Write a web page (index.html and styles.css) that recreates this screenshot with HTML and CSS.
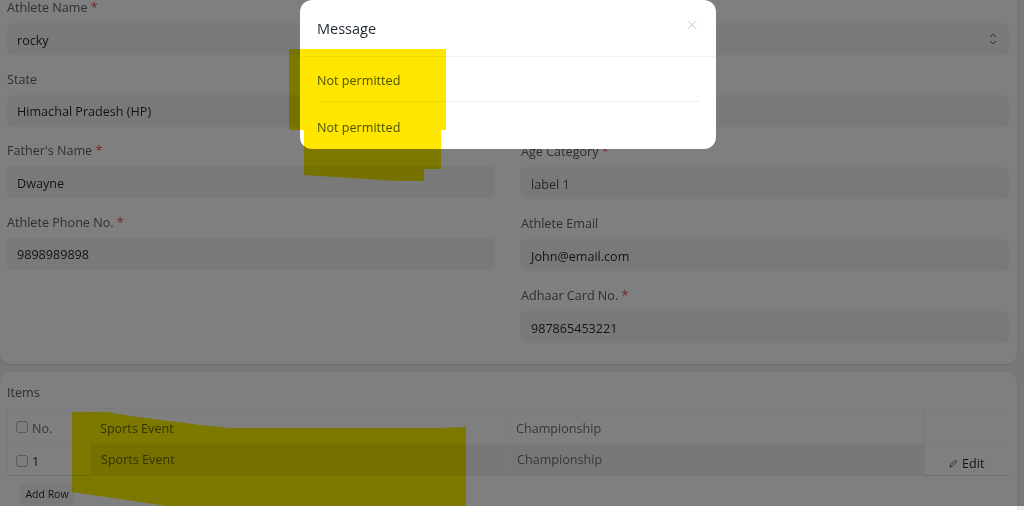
FILE: index.html
```html
<!DOCTYPE html>
<html lang="en">
<head>
    <meta charset="UTF-8">
    <meta name="viewport" content="width=device-width, initial-scale=1.0">
    <title>Athlete</title>
    <link rel="stylesheet" href="styles.css">
</head>
<body>
    <div class="page">
        <div class="form-card">
            <div class="form-column">
                <div class="field">
                    <label>Athlete Name <span class="req">*</span></label>
                    <div class="input">rocky</div>
                </div>
                <div class="field">
                    <label>State</label>
                    <div class="input">Himachal Pradesh (HP)</div>
                </div>
                <div class="field">
                    <label>Father's Name <span class="req">*</span></label>
                    <div class="input">Dwayne</div>
                </div>
                <div class="field">
                    <label>Athlete Phone No. <span class="req">*</span></label>
                    <div class="input">9898989898</div>
                </div>
            </div>
            <div class="form-column form-column-right">
                <div class="field">
                    <label>&nbsp;</label>
                    <div class="input input-select">
                        <svg class="updown" viewBox="0 0 8 12" width="8" height="12">
                            <path d="M1.2 4 L4 1.2 L6.8 4 M1.2 8 L4 10.8 L6.8 8" fill="none" stroke="#444" stroke-width="1"/>
                        </svg>
                    </div>
                </div>
                <div class="field">
                    <label>&nbsp;</label>
                    <div class="input"></div>
                </div>
                <div class="field">
                    <label>Age Category <span class="req">*</span></label>
                    <div class="input input-muted">label 1</div>
                </div>
                <div class="field">
                    <label>Athlete Email</label>
                    <div class="input">John@email.com</div>
                </div>
                <div class="field">
                    <label>Adhaar Card No. <span class="req">*</span></label>
                    <div class="input">987865453221</div>
                </div>
            </div>
        </div>

        <div class="items-card">
            <div class="items-title">Items</div>
            <div class="grid">
                <div class="grid-row grid-head">
                    <div class="cell cell-check"><input type="checkbox"> No.</div>
                    <div class="cell">Sports Event</div>
                    <div class="cell">Championship</div>
                    <div class="cell"></div>
                </div>
                <div class="grid-row grid-body">
                    <div class="cell cell-check cell-plain"><input type="checkbox"> <span class="row-no">1</span></div>
                    <div class="cell cell-value">Sports Event</div>
                    <div class="cell cell-value">Championship</div>
                    <div class="cell cell-plain cell-edit">
                        <svg viewBox="0 0 10 10" width="9" height="9">
                            <path d="M1 9 L1.6 6.6 L7 1.2 L8.8 3 L3.4 8.4 Z" fill="none" stroke="#333" stroke-width="0.9"/>
                        </svg>
                        Edit
                    </div>
                </div>
            </div>
            <button class="add-row">Add Row</button>
        </div>

        <div class="backdrop"></div>

        <div class="modal">
            <div class="modal-header">
                <span class="modal-title">Message</span>
                <span class="modal-close">&times;</span>
            </div>
            <div class="modal-body">
                <div class="message">Not permitted</div>
                <div class="message">Not permitted</div>
            </div>
        </div>

        <!-- highlighter marks drawn over the screenshot -->
        <svg class="marks" viewBox="0 0 1024 510" width="1024" height="510">
            <polygon fill="#f8f000" points="289,49 446,49 446,130 441,130 441,169 424,169 424,181 397,181 304,175 304,130 289,130"/>
            <polygon fill="#ffe600" points="300,49 446,49 446,130 441,130 441,149 304,149 304,130 300,130"/>
            <polygon fill="#f8f000" points="72,412 107,412 130,416 200,425 230,428 437,428 466,427 466,506 167,506 72,492"/>
        </svg>
    </div>
</body>
</html>
```

FILE: styles.css
```css
* {
    box-sizing: border-box;
}
body {
    margin: 0;
    background-color: #fff;
    font-family: "Open Sans", "Noto Sans", Arial, sans-serif;
    font-size: 12.6px;
    color: #1f272e;
}
.page {
    position: relative;
    width: 1024px;
    height: 510px;
    overflow: hidden;
    background-color: #f0f0f0;
}
.form-card {
    display: grid;
    grid-template-columns: 488px 489px;
    column-gap: 25px;
    width: 1017px;
    height: 384px;
    margin-top: -20px;
    padding: 20px 0 0 7px;
    background-color: #fff;
    border-radius: 0 0 10px 10px;
    box-shadow: 0 1px 2px rgba(0,0,0,0.1);
}
.form-column {
    display: flex;
    flex-direction: column;
    gap: 16.6px;
}
.form-column-right {
    gap: 17px;
}
.form-column-right label {
    padding-left: 1px;
}
.form-column-right .input {
    padding-left: 11px;
}
.field {
    height: 55px;
}
label {
    display: block;
    height: 14px;
    margin-top: 1px;
    margin-bottom: 8px;
    line-height: 14px;
    color: #58606b;
}
.req {
    color: #e24c4c;
}
.input {
    display: flex;
    align-items: center;
    justify-content: space-between;
    height: 32px;
    padding: 2px 10px 0;
    background-color: #f3f3f3;
    border-radius: 6px;
}
.input-muted {
    color: #4c5561;
}
.form-column-right .input-select {
    justify-content: flex-end;
    padding: 0 12px 0 0;
}
.items-card {
    width: 1017px;
    height: 140px;
    margin-top: 8px;
    padding: 12px 8px 0 7px;
    background-color: #fff;
    border-radius: 10px 10px 0 0;
    box-shadow: 0 1px 2px rgba(0,0,0,0.1);
}
.items-title {
    height: 24px;
    line-height: 17px;
    color: #58606b;
}
.grid {
    width: 1002px;
    border-top: 1px solid #f6f6f6;
    border-radius: 6px;
}
.grid-row {
    display: grid;
    grid-template-columns: 84px 416px 418px 84px;
}
.grid-head {
    height: 34px;
}
.grid-body {
    height: 33px;
}
.cell {
    display: flex;
    align-items: center;
    padding: 4px 9px 0;
    color: #687178;
    border-right: 1px solid #f5f5f5;
}
.cell:first-child {
    border-left: 1px solid #f5f5f5;
}
.cell:last-child {
    border-right: none;
}
.cell-check {
    gap: 4px;
    padding-left: 8px;
}
.cell-check input {
    appearance: none;
    width: 12px;
    height: 12px;
    margin: 0 0 2px;
    background-color: #fff;
    border: 1px solid #b0b5ba;
    border-radius: 3px;
}
.grid-body .cell {
    border-top: 1px solid #f5f5f5;
}
.grid-body .cell-value {
    padding: 0 10px 2px;
    background-color: #f0f0f0;
}
.grid-body .cell-check {
    padding-top: 4px;
}
.cell-plain {
    border-bottom: 1px solid #dcdcdc;
}
.row-no {
    color: #1f272e;
}
.grid-body .cell-edit {
    gap: 4px;
    padding: 7px 0 0 24px;
    color: #1f272e;
}
.add-row {
    display: block;
    width: 54px;
    height: 22px;
    margin: 7px 0 0 13px;
    padding: 0;
    background-color: #f3f3f3;
    border: none;
    border-radius: 6px;
    font-family: inherit;
    font-size: 10.5px;
    color: #1f272e;
}
.backdrop {
    position: absolute;
    top: 0;
    left: 0;
    width: 1024px;
    height: 506px;
    background-color: rgba(0,0,0,0.5);
}
.modal {
    position: absolute;
    top: 0;
    left: 300px;
    width: 416px;
    height: 149px;
    background-color: #fff;
    border-radius: 12px;
}
.modal-header {
    display: flex;
    align-items: center;
    justify-content: space-between;
    height: 57px;
    padding: 0 17px;
    border-bottom: 1px solid #f2f2f2;
}
.modal-title {
    font-size: 14.5px;
    color: #1f272e;
}
.modal-close {
    margin: 0 1px 7px 0;
    font-size: 20px;
    font-weight: 300;
    color: #d0d0d0;
}
.modal-body {
    padding: 0 17px;
}
.message {
    height: 45px;
    padding-top: 15px;
    line-height: 18px;
    color: #4c5a50;
}
.message:first-child {
    border-bottom: 1px solid #eeeeee;
}
.message:last-child {
    padding-top: 17px;
}
.marks {
    position: absolute;
    top: 0;
    left: 0;
    mix-blend-mode: multiply;
}
```
